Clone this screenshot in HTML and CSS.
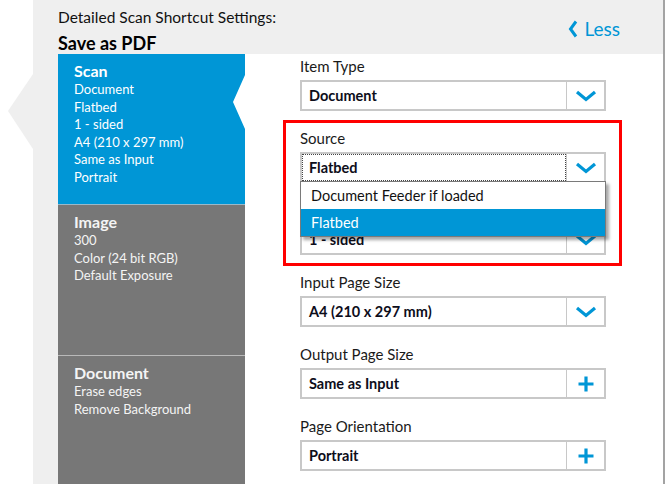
FILE: index.html
```html
<!DOCTYPE html>
<html lang="en">
<head>
  <meta charset="UTF-8" />
  <title>Detailed Scan Shortcut Settings</title>
  <link rel="stylesheet" href="styles.css">
</head>
<body>

  <div class="frame">
    <header class="top">
      <div class="titles">
        <p class="subtitle">Detailed Scan Shortcut Settings:</p>
        <h1>Save as PDF</h1>
      </div>
      <a href="#" class="less">
        <svg width="10" height="18" viewBox="0 0 10 18"><polyline points="8,1.5 2.5,9 8,16.5" fill="none" stroke="#0096d6" stroke-width="3"/></svg>
        Less
      </a>
    </header>

    <div class="body-row">
      <aside class="sidebar">
        <section class="side-item active">
          <h2>Scan</h2>
          <p>Document</p>
          <p>Flatbed</p>
          <p>1 - sided</p>
          <p>A4 (210 x 297 mm)</p>
          <p>Same as Input</p>
          <p>Portrait</p>
        </section>
        <section class="side-item">
          <h2>Image</h2>
          <p>300</p>
          <p>Color (24 bit RGB)</p>
          <p>Default Exposure</p>
        </section>
        <section class="side-item last">
          <h2>Document</h2>
          <p>Erase edges</p>
          <p>Remove Background</p>
        </section>
      </aside>

      <main class="settings">
        <div class="field">
          <label>Item Type</label>
          <div class="select">
            <span class="value">Document</span>
            <span class="btn"><svg width="22" height="12" viewBox="0 0 22 12"><polyline points="2,2 11,9.5 20,2" fill="none" stroke="#0096d6" stroke-width="3.2"/></svg></span>
          </div>
        </div>

        <div class="highlight">
          <div class="field">
            <label>Source</label>
            <div class="select open">
              <span class="value focused">Flatbed</span>
              <span class="btn"><svg width="22" height="12" viewBox="0 0 22 12"><polyline points="2,2 11,9.5 20,2" fill="none" stroke="#0096d6" stroke-width="3.2"/></svg></span>
              <ul class="options">
                <li>Document Feeder if loaded</li>
                <li class="selected">Flatbed</li>
              </ul>
            </div>
          </div>
          <div class="field">
            <label class="covered">Sides</label>
            <div class="select">
              <span class="value">1 - sided</span>
              <span class="btn"><svg width="22" height="12" viewBox="0 0 22 12"><polyline points="2,2 11,9.5 20,2" fill="none" stroke="#0096d6" stroke-width="3.2"/></svg></span>
            </div>
          </div>
        </div>

        <div class="field">
          <label>Input Page Size</label>
          <div class="select">
            <span class="value">A4 (210 x 297 mm)</span>
            <span class="btn"><svg width="22" height="12" viewBox="0 0 22 12"><polyline points="2,2 11,9.5 20,2" fill="none" stroke="#0096d6" stroke-width="3.2"/></svg></span>
          </div>
        </div>

        <div class="field">
          <label>Output Page Size</label>
          <div class="select">
            <span class="value">Same as Input</span>
            <span class="btn"><svg width="18" height="18" viewBox="0 0 18 18"><path d="M9 1.5v15M1.5 9h15" stroke="#0096d6" stroke-width="3.2"/></svg></span>
          </div>
        </div>

        <div class="field">
          <label>Page Orientation</label>
          <div class="select">
            <span class="value">Portrait</span>
            <span class="btn"><svg width="18" height="18" viewBox="0 0 18 18"><path d="M9 1.5v15M1.5 9h15" stroke="#0096d6" stroke-width="3.2"/></svg></span>
          </div>
        </div>
      </main>
    </div>
  </div>

</body>
</html>
```

FILE: styles.css
```css
/* Base */
* { box-sizing: border-box; margin: 0; padding: 0; }
body {
  font-family: Lato, 'Liberation Sans', sans-serif;
  background: #fff;
  color: #1a1a1a;
  overflow: hidden;
}

/* Frame */
.frame {
  position: relative;
  margin-left: 33px;
  width: 632px;
  height: 484px;
  background: #efefef;
  border-right: 2px solid #a3a3a3;
  display: flex;
  flex-direction: column;
}
.frame::before {
  content: "";
  position: absolute;
  left: -25px;
  top: 74px;
  border-right: 25px solid #efefef;
  border-top: 37px solid transparent;
  border-bottom: 38px solid transparent;
}

/* Header */
.top {
  height: 55px;
  padding-left: 25px;
  padding-right: 43px;
  display: flex;
  justify-content: space-between;
  align-items: flex-start;
}
.subtitle {
  font-size: 15.5px;
  line-height: 18px;
  margin-top: 8px;
  color: #111;
}
.top h1 {
  font-size: 18px;
  font-weight: 700;
  line-height: 22px;
  margin-top: 6px;
  color: #000;
}
.less {
  display: flex;
  align-items: center;
  gap: 6px;
  margin-top: 17px;
  font-size: 19px;
  color: #0096d6;
  text-decoration: none;
}

/* Body */
.body-row {
  flex: 1;
  display: flex;
  margin-left: 25px;
  background: #fff;
}

/* Sidebar */
.sidebar {
  width: 187px;
  display: flex;
  flex-direction: column;
}
.side-item {
  height: 151px;
  padding: 7px 16px 0;
  background: #777;
  color: #f4f4f4;
  border-bottom: 1px solid #b9b9b9;
}
.side-item.active {
  background: #0096d6;
  color: #fff;
  clip-path: polygon(0 0, 100% 0, 100% 21px, calc(100% - 12px) 48px, 100% 75px, 100% 100%, 0 100%);
  border-bottom-color: #9ab8c8;
}
.side-item.last {
  flex: 1;
  border-bottom: none;
}
.side-item h2 {
  font-size: 16px;
  font-weight: 700;
  line-height: 20px;
}
.side-item p {
  font-size: 13px;
  line-height: 17.6px;
}

/* Settings */
.settings {
  flex: 1;
  padding: 3px 0 0 55px;
}
.field {
  width: 306px;
  margin-bottom: 18px;
}
.field label {
  display: block;
  font-size: 15px;
  line-height: 18px;
  margin-bottom: 5px;
  color: #1a1a1a;
}
.field label.covered {
  visibility: hidden;
}
.select {
  position: relative;
  height: 31px;
  border: 2px solid #c8c8c8;
  display: flex;
  background: #fff;
}
.select .value {
  flex: 1;
  display: flex;
  align-items: center;
  padding-left: 7px;
  font-size: 14.5px;
  font-weight: 700;
  color: #0d0d1a;
}
.select .value.focused {
  outline: 1px dotted #444;
  outline-offset: -1px;
}
.select .btn {
  width: 38px;
  border-left: 1px solid #c8c8c8;
  display: flex;
  align-items: center;
  justify-content: center;
}

/* Dropdown list */
.options {
  position: absolute;
  top: 100%;
  left: -2px;
  width: 306px;
  list-style: none;
  background: #fff;
  border: 1px solid #7a7a7a;
  box-shadow: 3px 3px 3px rgba(0, 0, 0, 0.35);
  z-index: 2;
}
.options li {
  height: 27px;
  line-height: 27px;
  padding-left: 10px;
  font-size: 14.5px;
  color: #111;
}
.options li.selected {
  background: #0096d6;
  color: #fff;
}

/* Red annotation box */
.highlight {
  width: 339px;
  border: 3px solid #ff0000;
  margin: -9px 0 7px -17px;
  padding: 6px 0 8px 14px;
}
.highlight .field:last-child {
  margin-bottom: 0;
}
```
